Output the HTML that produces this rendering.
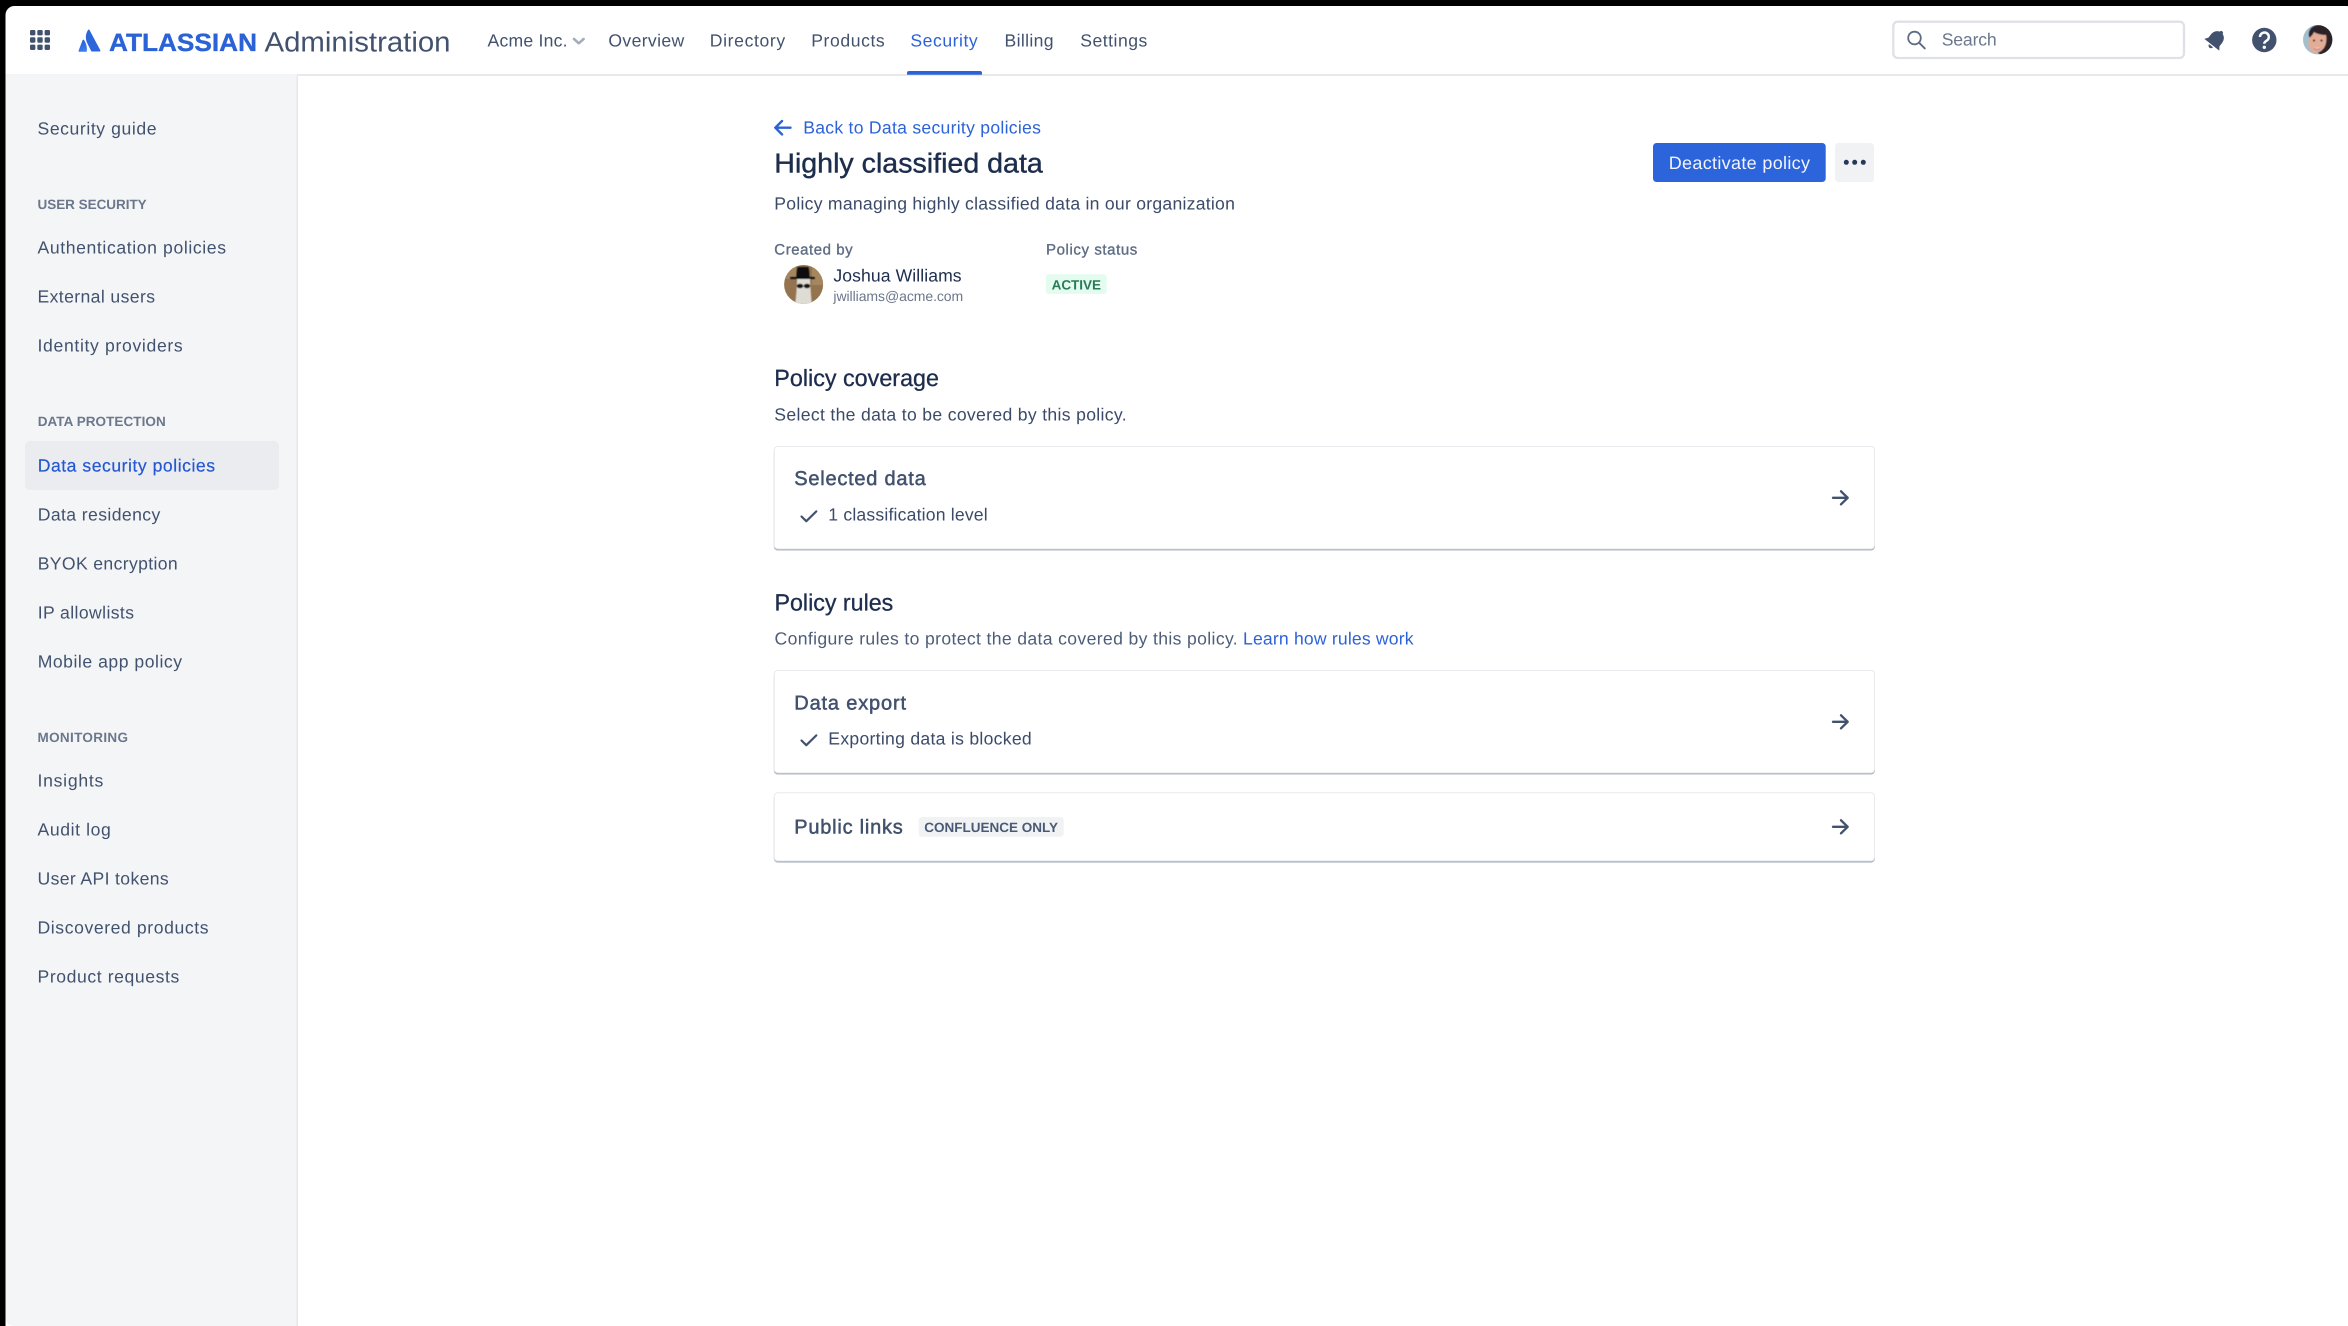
<!DOCTYPE html>
<html lang="en">
<head>
<meta charset="utf-8">
<title>Highly classified data</title>
<style>
html,body{margin:0;padding:0;background:#000;width:2348px;height:1326px;overflow:hidden}
svg{display:block}
text{font-family:"Liberation Sans",sans-serif;text-rendering:geometricPrecision;white-space:pre}
.n{font-size:17.600px;fill:#42526e}
.g{font-size:13.500px;font-weight:700;fill:#6b778c}
.b{font-size:17.600px;fill:#3a4a68}
.h2{font-size:23.500px;fill:#1d2d4d;stroke:#1d2d4d;stroke-width:.3}
.ct{font-size:20px;fill:#42526e;stroke:#42526e;stroke-width:.5}
.lb{font-size:15px;fill:#5e6c84;stroke:#5e6c84;stroke-width:.35}
.l{font-size:17.600px;fill:#2c62d8}
</style>
</head>
<body>
<svg xmlns="http://www.w3.org/2000/svg" width="2348" height="1326" viewBox="0 0 2348 1326">
<defs>
<linearGradient id="lg" x1="0" y1="0" x2="0.4" y2="1"><stop offset="0" stop-color="#1f5bd0"/><stop offset="1" stop-color="#3d7bf0"/></linearGradient>
<clipPath id="ca"><circle cx="803.6" cy="284.5" r="19.5"/></clipPath>
<clipPath id="cb"><circle cx="2317.7" cy="39.7" r="14.7"/></clipPath>
<filter id="soft"><feGaussianBlur stdDeviation="0.6"/></filter>
</defs>

<rect width="2348" height="1326" fill="#000"/>
<rect x="5.5" y="6" width="2350" height="1330" rx="9" fill="#fff"/>

<!-- sidebar -->
<path d="M5.5 74H297V1326H14a8.500 8.500 0 0 1-8.500-8.500Z" fill="#f4f5f7"/>
<rect x="296.500" y="76" width="1.500" height="1250" fill="#e6e8ec"/>
<rect x="297" y="74" width="2051" height="2" fill="#e8e9ec"/>

<!-- header left -->
<g fill="#42526e">
<rect x="30" y="30" width="5.400" height="5.400" rx="1.200"/><rect x="37.300" y="30" width="5.400" height="5.400" rx="1.200"/><rect x="44.600" y="30" width="5.400" height="5.400" rx="1.200"/>
<rect x="30" y="37.300" width="5.400" height="5.400" rx="1.200"/><rect x="37.300" y="37.300" width="5.400" height="5.400" rx="1.200"/><rect x="44.600" y="37.300" width="5.400" height="5.400" rx="1.200"/>
<rect x="30" y="44.600" width="5.400" height="5.400" rx="1.200"/><rect x="37.300" y="44.600" width="5.400" height="5.400" rx="1.200"/><rect x="44.600" y="44.600" width="5.400" height="5.400" rx="1.200"/>
</g>
<path d="M88 30c-2.500 4-3 8.500-.6 13.500l4 8h8.200a.8.8 0 0 0 .7-1.200L89.500 30c-.3-.7-1.100-.7-1.500 0Z" fill="#2b66db"/>
<path d="M84 40c-.4-.6-1.100-.5-1.400.1L78.600 50.600a.8.8 0 0 0 .7 1.100h7.400c.7-3.800-.2-8-2.700-11.700Z" fill="url(#lg)"/>
<text x="109" y="51" font-size="25" font-weight="700" fill="#2b62d6" stroke="#2b62d6" stroke-width=".35" textLength="148" lengthAdjust="spacingAndGlyphs">ATLASSIAN</text>
<text x="264.500" y="51.500" font-size="28" fill="#42526e" textLength="186" lengthAdjust="spacingAndGlyphs">Administration</text>
<text class="n" x="487.500" y="46.700" textLength="80">Acme Inc.</text>
<path d="M574 39l4.800 4.300L583.600 39" fill="none" stroke="#a5adba" stroke-width="2.600" stroke-linecap="round" stroke-linejoin="round"/>

<!-- nav -->
<text class="n" x="608.400" y="46.700" textLength="75.800">Overview</text>
<text class="n" x="709.800" y="46.700" textLength="75.400">Directory</text>
<text class="n" x="811.200" y="46.700" textLength="73.500">Products</text>
<text class="l" x="910.400" y="46.700" textLength="67.300">Security</text>
<text class="n" x="1004.500" y="46.700" textLength="49">Billing</text>
<text class="n" x="1080.300" y="46.700" textLength="67">Settings</text>
<path d="M907 74.700V73a2 2 0 0 1 2-2h71a2 2 0 0 1 2 2v1.700Z" fill="#2c62d8"/>

<!-- search -->
<rect x="1893.300" y="21.700" width="290.700" height="36.300" rx="4.500" fill="#fff" stroke="#dfe1e6" stroke-width="2.300"/>
<circle cx="1914.500" cy="38" r="6.300" fill="none" stroke="#5e6c84" stroke-width="1.800"/>
<path d="M1919.200 42.800l5.600 5.600" stroke="#5e6c84" stroke-width="1.900" stroke-linecap="round"/>
<text x="1941.700" y="45.700" font-size="17.600" fill="#6b778c" textLength="55">Search</text>

<!-- bell -->
<g transform="translate(2215.500 40) rotate(38)" fill="#42526e">
<path d="M-1.800-9.200a1.800 1.800 0 0 1 3.600 0C5.500-8 7-4.800 7-1.200V2.500L9.500 6H-9.500L-7 2.500V-1.200C-7-4.800-5.500-8-1.800-9.200Z"/>
<path d="M-2.500 7.300h5a2.500 2.500 0 0 1-5 0Z"/>
</g>

<!-- help -->
<circle cx="2264.300" cy="40" r="12.200" fill="#42526e"/>
<path d="M2260 37a4.400 4.400 0 1 1 6.800 3.600c-1.700 1-2.500 1.700-2.500 3.100" fill="none" stroke="#fff" stroke-width="2.500"/>
<circle cx="2264.300" cy="47.300" r="1.700" fill="#fff"/>

<!-- user avatar -->
<g clip-path="url(#cb)">
<rect x="2300" y="22" width="36" height="36" fill="#a3bfce"/>
<g filter="url(#soft)">
<path d="M2309 36c-1-7 4-11 11-11 8 0 14 5 14 15 0 7-2 13-5 16h-7l-10-8Z" fill="#2a2326"/>
<path d="M2309 38c3-2 4-4 5-6 3 2 8 3 12 3 1 5 0 11-3 14-3 4-9 5-12 2-3-3-3-9-2-13Z" fill="#e2ac96"/>
<path d="M2312.500 46.500c2.500 2 6 2 8.500 .3-1 3-6.500 4-8.500-.3Z" fill="#fff"/>
<path d="M2312.500 46.500c2.500 2.600 6 2.800 8.500 .3-1 4-6.500 5-8.500-.3Z" fill="#c05562" opacity=".7"/>
<circle cx="2314" cy="40.500" r="1.100" fill="#2a2326"/><circle cx="2321.500" cy="40.500" r="1.100" fill="#2a2326"/>
</g>
</g>

<!-- sidebar text -->
<text class="n" x="37.500" y="134.300" textLength="119">Security guide</text>
<text class="g" x="37.500" y="209" textLength="109.200">USER SECURITY</text>
<text class="n" x="37.500" y="253.600" textLength="188.500">Authentication policies</text>
<text class="n" x="37.500" y="302.500" textLength="117.500">External users</text>
<text class="n" x="37.500" y="351.500" textLength="145.200">Identity providers</text>
<text class="g" x="37.700" y="426" textLength="128">DATA PROTECTION</text>
<rect x="25" y="441" width="254" height="49" rx="5" fill="#ebecf0"/>
<text x="37.700" y="471.500" font-size="17.600" fill="#2457d1" stroke="#2457d1" stroke-width=".2" textLength="177.300">Data security policies</text>
<text class="n" x="37.700" y="520.500" textLength="122.600">Data residency</text>
<text class="n" x="37.700" y="569.500" textLength="140">BYOK encryption</text>
<text class="n" x="37.700" y="618.500" textLength="96.300">IP allowlists</text>
<text class="n" x="37.700" y="667.500" textLength="144.300">Mobile app policy</text>
<text class="g" x="37.500" y="742.200" textLength="90.500">MONITORING</text>
<text class="n" x="37.500" y="786.300" textLength="65.800">Insights</text>
<text class="n" x="37.500" y="835.300" textLength="73.300">Audit log</text>
<text class="n" x="37.500" y="884.300" textLength="131.200">User API tokens</text>
<text class="n" x="37.500" y="933.500" textLength="171">Discovered products</text>
<text class="n" x="37.500" y="982.300" textLength="141.800">Product requests</text>

<!-- page head -->
<path d="M790.500 127.700H776M782 121L775.300 127.700l6.700 6.700" fill="none" stroke="#2c62d8" stroke-width="2.400" stroke-linecap="round" stroke-linejoin="round"/>
<text class="l" x="803.200" y="133.600" textLength="237.700">Back to Data security policies</text>
<text x="774.300" y="172.700" font-size="27.500" fill="#1d2d4d" stroke="#1d2d4d" stroke-width=".4" textLength="268.500" lengthAdjust="spacingAndGlyphs">Highly classified data</text>
<text class="b" x="774.300" y="209.400" textLength="460.600">Policy managing highly classified data in our organization</text>

<rect x="1653" y="143" width="172.700" height="39" rx="3.500" fill="#2c64dc"/>
<text x="1668.700" y="169" font-size="18" fill="#f2f5fd" textLength="141.300">Deactivate policy</text>
<rect x="1835" y="143" width="39" height="39" rx="3.500" fill="#f1f2f4"/>
<circle cx="1846.300" cy="162.300" r="2.500" fill="#253858"/><circle cx="1854.700" cy="162.300" r="2.500" fill="#253858"/><circle cx="1863.300" cy="162.300" r="2.500" fill="#253858"/>

<text class="lb" x="774.300" y="254.600" textLength="78.300">Created by</text>
<text class="lb" x="1046" y="254.600" textLength="91.300">Policy status</text>

<!-- joshua avatar -->
<g clip-path="url(#ca)">
<rect x="784" y="265" width="40" height="40" fill="#94744f"/>
<path d="M784 265h12v14h-12ZM812 265h12v20h-12Z" fill="#a4875f"/>
<g filter="url(#soft)">
<path d="M797 279h13c.5 8 1 18 2 26h-17c1-8 2-18 2-26Z" fill="#dedcd5"/>
<rect x="790" y="277" width="25" height="2" rx="1" fill="#0e0e10"/>
<path d="M796.500 278c0-4 .5-11 1.500-11h10c1 0 1.500 7 1.500 11Z" fill="#0e0e10"/>
<ellipse cx="800" cy="286" rx="3.300" ry="2.300" fill="#141416"/><ellipse cx="807" cy="286" rx="3.300" ry="2.300" fill="#141416"/>
</g>
</g>
<text x="833.400" y="281.300" font-size="17.600" fill="#1d2d4d" textLength="128.200">Joshua Williams</text>
<text x="833.400" y="301" font-size="14" fill="#6b778c" textLength="129.800">jwilliams@acme.com</text>
<rect x="1045.800" y="274.300" width="60.900" height="19.700" rx="3" fill="#e3fcef"/>
<text x="1051.600" y="289.300" font-size="13.500" font-weight="700" fill="#2a7a58" textLength="49.400">ACTIVE</text>

<!-- coverage -->
<text class="h2" x="774.300" y="386" textLength="164.700" lengthAdjust="spacingAndGlyphs">Policy coverage</text>
<text class="b" x="774.300" y="420.300" textLength="352.300">Select the data to be covered by this policy.</text>

<rect x="773.800" y="448" width="1101.200" height="102.500" rx="4" fill="#aeb5c2"/>
<rect x="773.800" y="446" width="1101.200" height="103.200" rx="4" fill="#e8eaee"/>
<rect x="774.800" y="447" width="1099.200" height="101.200" rx="3" fill="#fff"/>
<text class="ct" x="794.300" y="484.800" textLength="131.400">Selected data</text>
<path d="M801.500 516.500l4.800 4.700 10-9.800" fill="none" stroke="#42526e" stroke-width="2.200" stroke-linecap="round" stroke-linejoin="round"/>
<text class="b" x="828.300" y="520.600" textLength="159.400">1 classification level</text>
<path d="M1833 497.800h14.500M1841 491.300l6.700 6.500-6.700 6.500" fill="none" stroke="#42526e" stroke-width="2.400" stroke-linecap="round" stroke-linejoin="round"/>

<!-- rules -->
<text class="h2" x="774.500" y="610.300" textLength="118.800" lengthAdjust="spacingAndGlyphs">Policy rules</text>
<text x="774.500" y="644.600" font-size="17.600" fill="#4d5d79" textLength="463.200">Configure rules to protect the data covered by this policy.</text>
<text class="l" x="1243" y="644.600" textLength="170.600">Learn how rules work</text>

<rect x="773.800" y="672" width="1101.200" height="102.500" rx="4" fill="#aeb5c2"/>
<rect x="773.800" y="670" width="1101.200" height="103.200" rx="4" fill="#e8eaee"/>
<rect x="774.800" y="671" width="1099.200" height="101.200" rx="3" fill="#fff"/>
<text class="ct" x="794.300" y="709.400" textLength="111.700">Data export</text>
<path d="M801.500 740.500l4.800 4.700 10-9.800" fill="none" stroke="#42526e" stroke-width="2.200" stroke-linecap="round" stroke-linejoin="round"/>
<text class="b" x="828.300" y="744.600" textLength="203.400">Exporting data is blocked</text>
<path d="M1833 721.800h14.500M1841 715.300l6.700 6.500-6.700 6.500" fill="none" stroke="#42526e" stroke-width="2.400" stroke-linecap="round" stroke-linejoin="round"/>

<rect x="773.800" y="794.300" width="1101.200" height="68.300" rx="4" fill="#aeb5c2"/>
<rect x="773.800" y="792.300" width="1101.200" height="69" rx="4" fill="#e8eaee"/>
<rect x="774.800" y="793.300" width="1099.200" height="67" rx="3" fill="#fff"/>
<text class="ct" x="794.300" y="833.700" textLength="108.400">Public links</text>
<rect x="918.700" y="817" width="145" height="19.700" rx="3" fill="#f1f2f4"/>
<text x="924.300" y="832" font-size="13.500" font-weight="700" fill="#4a5a76" textLength="133.700">CONFLUENCE ONLY</text>
<path d="M1833 826.800h14.500M1841 820.300l6.700 6.500-6.700 6.500" fill="none" stroke="#42526e" stroke-width="2.400" stroke-linecap="round" stroke-linejoin="round"/>
</svg>
</body>
</html>
